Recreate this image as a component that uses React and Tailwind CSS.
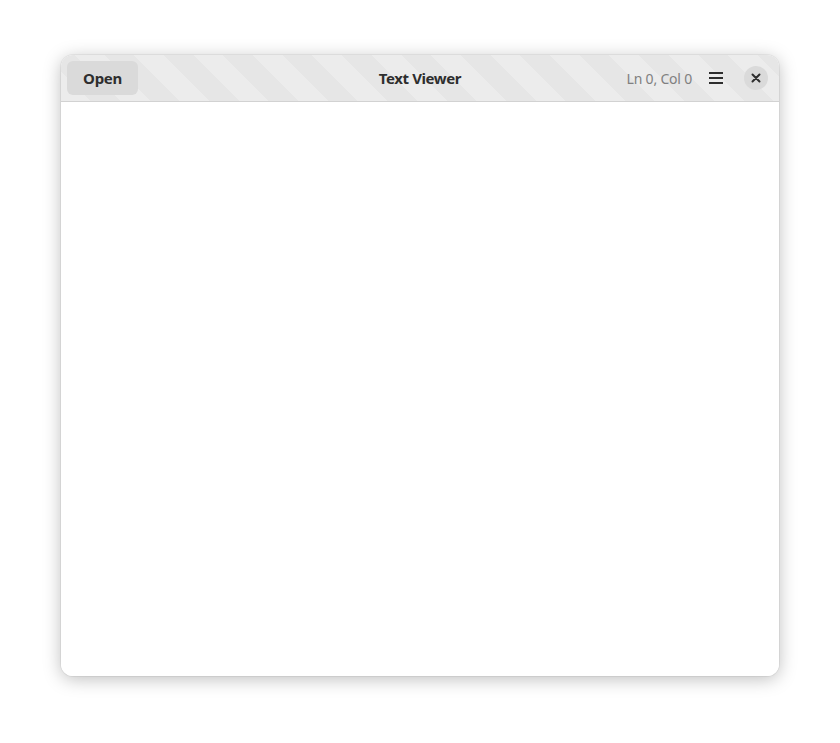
import React from "react";

export default function App() {
  return (
    <div className="w-[840px] h-[743px] bg-white pt-[55px] pl-[61px] font-['Noto_Sans',sans-serif]">
      <div className="w-[718px] h-[621px] rounded-[12px] bg-[#fefefe] shadow-[0_3px_18px_rgba(0,0,0,0.26),0_0_0_1px_rgba(0,0,0,0.05)] flex flex-col overflow-hidden">
        {/* header bar */}
        <div className="relative h-[47px] shrink-0 flex items-center px-[6px] border-b border-[#d2d2d2] bg-[repeating-linear-gradient(45deg,#ececec_0px,#ececec_21px,#e6e6e6_21px,#e6e6e6_42px)]">
          <button className="h-[34px] w-[71px] rounded-[6px] bg-[#dadada] text-[15px] font-bold text-[#2e2e2e] tracking-[-0.3px]">
            Open
          </button>
          <div className="absolute left-0 right-0 text-center text-[15px] font-bold text-[#2e2e2e] tracking-[-0.4px] pointer-events-none">
            Text Viewer
          </div>
          <div className="ml-auto flex items-center">
            <span className="text-[14px] text-[#808080] mr-[16px] tracking-[-0.2px]">Ln 0, Col 0</span>
            <svg width="16" height="16" viewBox="0 0 16 16" className="mr-[20px]">
              <rect x="1" y="2" width="14" height="2" fill="#2e2e2e" />
              <rect x="1" y="7" width="14" height="2" fill="#2e2e2e" />
              <rect x="1" y="12" width="14" height="2" fill="#2e2e2e" />
            </svg>
            <div className="w-[24px] h-[24px] rounded-full bg-[#dadada] flex items-center justify-center mr-[5px]">
              <svg width="10" height="10" viewBox="0 0 10 10">
                <path d="M1.5 1.5 L8.5 8.5 M8.5 1.5 L1.5 8.5" stroke="#2e2e2e" strokeWidth="2" strokeLinecap="round" />
              </svg>
            </div>
          </div>
        </div>
        <div className="flex-1 bg-white" />
      </div>
    </div>
  );
}
